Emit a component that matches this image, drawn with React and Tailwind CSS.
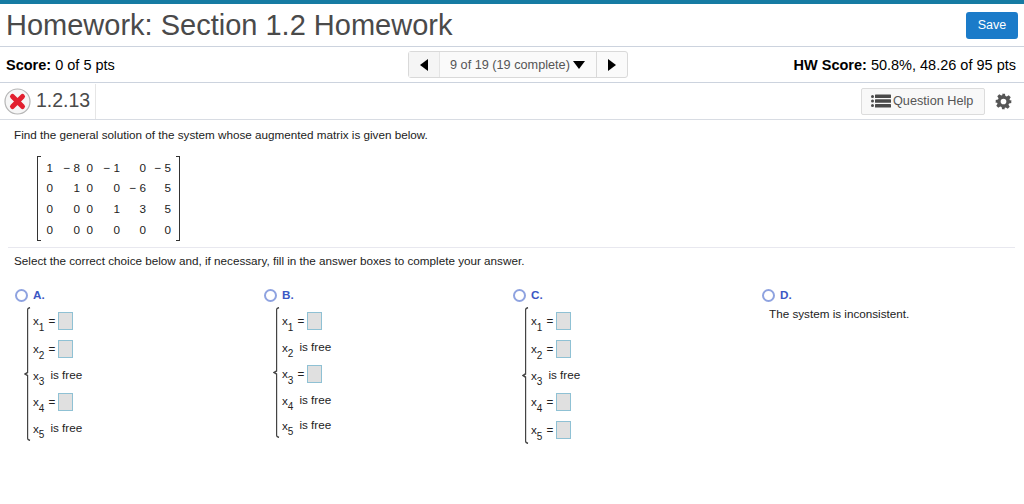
const matrix = [
    ['1', '− 8', '0', '− 1', '0', '− 5'],
    ['0', '1', '0', '0', '− 6', '5'],
    ['0', '0', '0', '1', '3', '5'],
    ['0', '0', '0', '0', '0', '0'],
];
const colWidths = ['w-[12px]', 'w-[27px]', 'w-[13px]', 'w-[27px]', 'w-[26px]', 'w-[25px]'];

const choices = [
    { letter: 'A.', rows: ['box', 'box', 'free', 'box', 'free'] },
    { letter: 'B.', rows: ['box', 'free', 'box', 'free', 'free'] },
    { letter: 'C.', rows: ['box', 'box', 'free', 'box', 'box'] },
];

function Brace() {
    return (
        <svg className="w-[7px] h-auto self-stretch shrink-0" viewBox="0 0 7 100" preserveAspectRatio="none" fill="none">
            <path d="M6 0.4 L4 1.2 L3.6 2 L3.6 48.8 L1 50 L3.6 51.2 L3.6 98 L4 98.8 L6 99.6" stroke="#444" strokeWidth="1.2" />
        </svg>
    );
}

function Variable({ n, type }) {
    const name = (
        <span className="text-[#222]">
            x<sub className="text-[10px] align-[-3px] leading-none">{n}</sub>
        </span>
    );
    if (type === 'free') {
        return (
            <div className="h-[25px] flex items-center">
                {name}
                <span className="ml-[6px] -translate-y-[1px]">is free</span>
            </div>
        );
    }
    return (
        <div className="h-[28px] flex items-center">
            {name}
            <span className="ml-[4px] mr-[3px]">=</span>
            <span className="w-[15px] h-[18px] bg-[#e0e0e0] border border-[#8fc1d4]" />
        </div>
    );
}

function Radio({ letter }) {
    return (
        <div className="flex items-center h-[16px] gap-[5px]">
            <span className="w-[13px] h-[13px] rounded-full border-2 border-[#8fa3e0] bg-white" />
            <span className="text-[11.7px] font-bold text-[#3b57c4]">{letter}</span>
        </div>
    );
}

export default function App() {
    return (
        <div className="min-h-screen bg-white text-[#222] font-['Liberation_Sans',Arial,sans-serif]">
            <div className="h-[4px] bg-[#167ba3]" />

            <div className="h-[43px] flex items-center justify-between pl-[6px] pr-[6px] border-b border-[#ccd3de]">
                <h1 className="text-[29px] leading-none text-[#4a4a4a]">Homework: Section 1.2 Homework</h1>
                <button className="w-[52px] h-[27px] bg-[#1b7bc9] rounded-[3px] text-white text-[12.5px]">Save</button>
            </div>

            <div className="h-[36px] flex items-center pl-[6px] pr-[8px] border-b border-[#ccd3de] text-[14.5px] text-black">
                <div className="w-[402px] pt-[2px]">
                    <b>Score:</b> 0 of 5 pts
                </div>
                <div className="flex h-[27px] w-[220px] border border-[#d9d9d9] rounded-[3px] bg-[#fafafa]">
                    <div className="w-[31px] flex items-center justify-center bg-[#f5f5f5] border-r border-[#e4e4e4]">
                        <svg width="8" height="12" viewBox="0 0 8 12"><path d="M8 0v12L0 6z" fill="#000" /></svg>
                    </div>
                    <div className="flex-1 flex items-center pl-[10px] gap-[3px] text-[12.7px] text-[#555]">
                        <span className="pt-[2px]">9 of 19 (19 complete)</span>
                        <svg width="12" height="8" viewBox="0 0 12 8"><path d="M0 0h12L6 8z" fill="#000" /></svg>
                    </div>
                    <div className="w-[31px] flex items-center justify-center border-l border-[#d9d9d9]">
                        <svg width="8" height="12" viewBox="0 0 8 12"><path d="M0 0v12l8-6z" fill="#000" /></svg>
                    </div>
                </div>
                <div className="flex-1 text-right pt-[2px]">
                    <b>HW Score:</b> 50.8%, 48.26 of 95 pts
                </div>
            </div>

            <div className="h-[37px] flex items-center border-b border-[#d8dce3]">
                <div className="w-[96px] h-[35px] flex items-center pl-[4px] gap-[5px] border-r border-[#e6e6e6]">
                    <svg width="27" height="27" viewBox="0 0 27 27">
                        <circle cx="13.5" cy="13.5" r="12.5" fill="#f6f6f6" stroke="#b5b5b5" strokeWidth="1.2" />
                        <path d="M8.5 8.5l10 10M18.5 8.5l-10 10" stroke="#e2202f" strokeWidth="5" strokeLinecap="round" />
                    </svg>
                    <span className="text-[19.5px] text-[#4a4a4a]">1.2.13</span>
                </div>
                <div className="ml-auto flex items-center h-[27px] w-[124px] mr-[10px] pl-[9px] gap-[2px] border border-[#dcdcdc] rounded-[2px] bg-[#f8f8f8] text-[12.7px] text-[#555]">
                    <svg width="20" height="14" viewBox="0 0 20 14" fill="#4a4a4a">
                        <rect x="0" y="1" width="3" height="3" rx="1.5" />
                        <rect x="0" y="5.5" width="3" height="3" rx="1.5" />
                        <rect x="0" y="10" width="3" height="3" rx="1.5" />
                        <rect x="4" y="0.5" width="16" height="3.6" rx="0.6" />
                        <rect x="4" y="5.2" width="16" height="3.6" rx="0.6" />
                        <rect x="4" y="9.9" width="16" height="3.6" rx="0.6" />
                    </svg>
                    <span className="pt-[2px]">Question Help</span>
                </div>
                <svg className="mr-[12px]" width="17" height="17" viewBox="0 0 24 24" fill="#555">
                    <path fillRule="evenodd" d="M10 1h4l.7 3.2 1.9.8 2.8-1.8 2.8 2.8-1.8 2.8.8 1.9L23 10v4l-3.2.7-.8 1.9 1.8 2.8-2.8 2.8-2.8-1.8-1.9.8L14 23h-4l-.7-3.2-1.9-.8-2.8 1.8-2.8-2.8 1.8-2.8-.8-1.9L1 14v-4l3.2-.7.8-1.9-1.8-2.8 2.8-2.8 2.8 1.8 1.9-.8zM12 8a4 4 0 100 8 4 4 0 000-8z" />
                </svg>
            </div>

            <div className="px-[8px] text-[11.7px] text-[#222]">
                <p className="pl-[6px] pt-[8px] leading-[13px]">
                    Find the general solution of the system whose augmented matrix is given below.
                </p>

                <div className="flex ml-[29px] mt-[15px] w-[143px] h-[85px]">
                    <div className="w-[4px] border-l border-y border-[#333]" />
                    <div className="flex-1 flex flex-col justify-around py-[1px]">
                        {matrix.map((row, i) => (
                            <div key={i} className="flex">
                                {row.map((v, j) => (
                                    <span key={j} className={`${colWidths[j]} text-right whitespace-pre`}>{v}</span>
                                ))}
                            </div>
                        ))}
                    </div>
                    <div className="w-[4px] border-r border-y border-[#333]" />
                </div>

                <div className="mt-[6px] mr-[1px] border-t border-[#e8e8ef]" />

                <p className="pl-[6px] pt-[6px] leading-[13px]">
                    Select the correct choice below and, if necessary, fill in the answer boxes to complete your answer.
                </p>

                <div className="flex pl-[7px] pt-[20px]">
                    {choices.map((c) => (
                        <div key={c.letter} className="w-[249px]">
                            <Radio letter={c.letter} />
                            <div className="flex ml-[9px] mt-[4px]">
                                <Brace />
                                <div className="ml-[2px]">
                                    {c.rows.map((type, i) => (
                                        <Variable key={i} n={i + 1} type={type} />
                                    ))}
                                </div>
                            </div>
                        </div>
                    ))}
                    <div>
                        <Radio letter="D." />
                        <p className="ml-[7px] mt-[2px]">The system is inconsistent.</p>
                    </div>
                </div>
            </div>
        </div>
    );
}
